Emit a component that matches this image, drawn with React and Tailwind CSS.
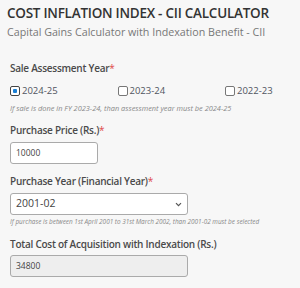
import React from "react";

function Radio({ checked, label }) {
  return (
    <label className="flex items-center gap-[2px] w-[107.5px] shrink-0 h-[10px]">
      <span
        className={
          "w-[10px] h-[10px] rounded-[2px] border flex items-center justify-center bg-white shrink-0 " +
          (checked ? "border-[#444]" : "border-[#777]")
        }
      >
        {checked && <span className="w-[4px] h-[4px] rounded-[1px] bg-[#1a7fd4]" />}
      </span>
      <span className="text-[9.5px] text-[#505560] leading-[10px]">{label}</span>
    </label>
  );
}

function Label({ children, req, className = "" }) {
  return (
    <div className={"text-[10px] font-semibold tracking-[-0.25px] text-[#4a4a4a] leading-[14px] whitespace-nowrap " + className}>
      {children}
      {req && <span className="text-[#e04848] font-normal">*</span>}
    </div>
  );
}

export default function App() {
  return (
    <div className="w-[300px] h-[288px] bg-[#f7f7f7] overflow-hidden font-['Open_Sans',sans-serif]">
      <div className="px-[7px] pt-[5px]">
        <h1 className="text-[13.5px] font-semibold tracking-[-0.25px] leading-[16px] text-[#333] whitespace-nowrap">
          COST INFLATION INDEX - CII CALCULATOR
        </h1>
        <p className="text-[10.7px] text-[#777] leading-[14px] mt-[4px] whitespace-nowrap">
          Capital Gains Calculator with Indexation Benefit - CII
        </p>
      </div>
      <div className="px-[10px]">
        <Label req className="mt-[22px]">Sale Assessment Year</Label>
        <div className="flex mt-[11px]">
          <Radio checked label="2024-25" />
          <Radio label="2023-24" />
          <Radio label="2022-23" />
        </div>
        <p className="text-[7.4px] italic text-[#888] mt-[8px] leading-[9px] whitespace-nowrap">
          If sale is done in FY 2023-24, than assessment year must be 2024-25
        </p>

        <Label req className="mt-[10px]">Purchase Price (Rs.)</Label>
        <div className="mt-[5px] w-[88px] h-[22px] bg-white border border-[#aaa] rounded-[3px] flex items-center px-[5px]">
          <span className="text-[8.5px] text-[#444]">10000</span>
        </div>

        <Label req className="mt-[10px]">Purchase Year (Financial Year)</Label>
        <div className="mt-[5px] w-[178px] h-[22px] bg-white border border-[#aaa] rounded-[3px] flex items-center justify-between pl-[5px] pr-[5px]">
          <span className="text-[10.5px] text-[#444]">2001-02</span>
          <svg width="7" height="5" viewBox="0 0 7 5" fill="none">
            <path d="M1 1.2l2.5 2.5 2.5-2.5" stroke="#555" strokeWidth="1.2" />
          </svg>
        </div>
        <p className="text-[6.4px] italic text-[#888] mt-[2px] leading-[9px] whitespace-nowrap">
          If purchase is between 1st April 2001 to 31st March 2002, than 2001-02 must be selected
        </p>

        <Label className="mt-[11px]">Total Cost of Acquisition with Indexation (Rs.)</Label>
        <div className="mt-[4px] w-[178px] h-[22px] bg-[#eeeeee] border border-[#aaa] rounded-[3px] flex items-center px-[5px]">
          <span className="text-[8.5px] text-[#444]">34800</span>
        </div>
      </div>
    </div>
  );
}
